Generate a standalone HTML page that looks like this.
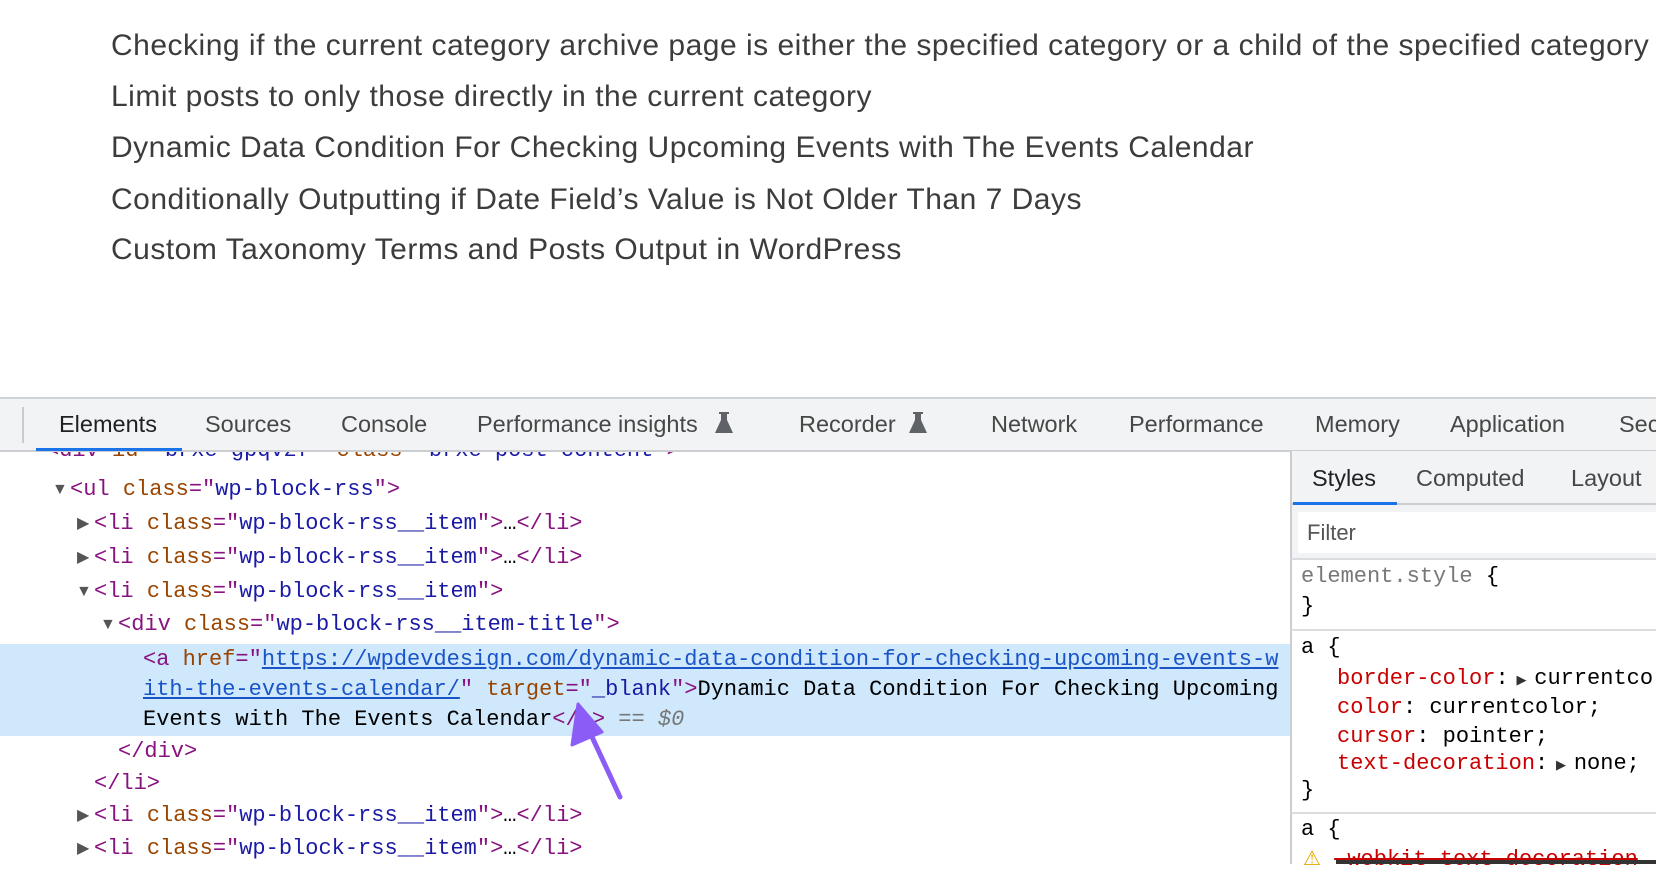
<!DOCTYPE html>
<html><head><meta charset="utf-8"><style>
*{margin:0;padding:0;box-sizing:border-box}
body{width:1656px;height:864px;overflow:hidden;background:#fff;position:relative;font-family:"Liberation Sans",Arial,sans-serif}
.t{position:absolute;left:111px;font-size:30px;letter-spacing:0.5px;color:#3c3c3c;white-space:nowrap;line-height:34px}
.tabs{position:absolute;left:0;top:397px;width:1656px;height:55px;background:#f1f3f4;border-top:2px solid #d0d3d6;border-bottom:2px solid #cbcdd1}
.tab{position:absolute;top:12px;font-size:23.5px;color:#474747;white-space:nowrap}
.m{position:absolute;font-family:"Liberation Mono",monospace;font-size:22px;white-space:nowrap;line-height:30px}
.tg{color:#881280}.an{color:#994500}.av{color:#1a1aa6}.lk{color:#1a55c8;text-decoration:underline}
.pr{color:#c80000}
.sep{position:absolute;left:1291px;width:365px;height:2px;background:#dadce0}
.ar{position:absolute;color:#555;font-size:16px;line-height:30px}
</style></head><body>
<div class="t" style="top:29px">Checking if the current category archive page is either the specified category or a child of the specified category</div>
<div class="t" style="top:80px">Limit posts to only those directly in the current category</div>
<div class="t" style="top:131px">Dynamic Data Condition For Checking Upcoming Events with The Events Calendar</div>
<div class="t" style="top:183px">Conditionally Outputting if Date Field’s Value is Not Older Than 7 Days</div>
<div class="t" style="top:233px">Custom Taxonomy Terms and Posts Output in WordPress</div>

<div class="tabs">
<div style="position:absolute;left:22px;top:8px;width:2px;height:36px;background:#c8cbcf"></div>
<div class="tab" style="left:59px;color:#202124">Elements</div>
<div style="position:absolute;left:36px;top:49px;width:146px;height:3px;background:#1a73e8"></div>
<div class="tab" style="left:205px">Sources</div>
<div class="tab" style="left:341px">Console</div>
<div class="tab" style="left:477px">Performance insights</div>
<svg style="position:absolute;left:714px;top:12px" width="20" height="24" viewBox="0 0 20 24"><path d="M5 1h10v2h-2v6l6 13H1l6-13V3H5z" fill="#5f6368"/></svg>
<div class="tab" style="left:799px">Recorder</div>
<svg style="position:absolute;left:908px;top:12px" width="20" height="24" viewBox="0 0 20 24"><path d="M5 1h10v2h-2v6l6 13H1l6-13V3H5z" fill="#5f6368"/></svg>
<div class="tab" style="left:991px">Network</div>
<div class="tab" style="left:1129px">Performance</div>
<div class="tab" style="left:1315px">Memory</div>
<div class="tab" style="left:1450px">Application</div>
<div class="tab" style="left:1619px">Sec</div>
</div>

<div style="position:absolute;left:0;top:644px;width:1290px;height:92px;background:#cfe8fc"></div>

<div class="m" style="left:46px;top:436px;clip-path:inset(16px 0 0 0)"><span class="tg">&lt;div </span><span class="an">id</span><span class="tg">="</span><span class="av">brxe-gpqvzf</span><span class="tg">" </span><span class="an">class</span><span class="tg">="</span><span class="av">brxe-post-content</span><span class="tg">"&gt;</span></div>
<div class="ar" style="left:52px;top:475px">▼</div>
<div class="m" style="left:70px;top:475px"><span class="tg">&lt;ul </span><span class="an">class</span><span class="tg">="</span><span class="av">wp-block-rss</span><span class="tg">"&gt;</span></div>
<div class="ar" style="left:77px;top:509px">▶</div>
<div class="m" style="left:94px;top:509px"><span class="tg">&lt;li </span><span class="an">class</span><span class="tg">="</span><span class="av">wp-block-rss__item</span><span class="tg">"&gt;</span>…<span class="tg">&lt;/li&gt;</span></div>
<div class="ar" style="left:77px;top:543px">▶</div>
<div class="m" style="left:94px;top:543px"><span class="tg">&lt;li </span><span class="an">class</span><span class="tg">="</span><span class="av">wp-block-rss__item</span><span class="tg">"&gt;</span>…<span class="tg">&lt;/li&gt;</span></div>
<div class="ar" style="left:76px;top:577px">▼</div>
<div class="m" style="left:94px;top:577px"><span class="tg">&lt;li </span><span class="an">class</span><span class="tg">="</span><span class="av">wp-block-rss__item</span><span class="tg">"&gt;</span></div>
<div class="ar" style="left:100px;top:610px">▼</div>
<div class="m" style="left:118px;top:610px"><span class="tg">&lt;div </span><span class="an">class</span><span class="tg">="</span><span class="av">wp-block-rss__item-title</span><span class="tg">"&gt;</span></div>
<div class="m" style="left:143px;top:645px"><span class="tg">&lt;a </span><span class="an">href</span><span class="tg">="</span><span class="lk">https://wpdevdesign.com/dynamic-data-condition-for-checking-upcoming-events-w</span></div>
<div class="m" style="left:143px;top:675px"><span class="lk">ith-the-events-calendar/</span><span class="tg">" </span><span class="an">target</span><span class="tg">="</span><span class="av">_blank</span><span class="tg">"&gt;</span>Dynamic Data Condition For Checking Upcoming</div>
<div class="m" style="left:143px;top:705px">Events with The Events Calendar<span class="tg">&lt;/a&gt;</span> <span style="color:#777">==</span> <i style="color:#777">$0</i></div>
<div class="m" style="left:118px;top:737px"><span class="tg">&lt;/div&gt;</span></div>
<div class="m" style="left:94px;top:769px"><span class="tg">&lt;/li&gt;</span></div>
<div class="ar" style="left:77px;top:801px">▶</div>
<div class="m" style="left:94px;top:801px"><span class="tg">&lt;li </span><span class="an">class</span><span class="tg">="</span><span class="av">wp-block-rss__item</span><span class="tg">"&gt;</span>…<span class="tg">&lt;/li&gt;</span></div>
<div class="ar" style="left:77px;top:834px">▶</div>
<div class="m" style="left:94px;top:834px"><span class="tg">&lt;li </span><span class="an">class</span><span class="tg">="</span><span class="av">wp-block-rss__item</span><span class="tg">"&gt;</span>…<span class="tg">&lt;/li&gt;</span></div>

<svg style="position:absolute;left:0;top:0" width="1656" height="864"><path d="M620 797 L586 724" stroke="#8b5cf6" stroke-width="5" stroke-linecap="round"/><path d="M578 704 L572 745 L602 732 Z" fill="#8b5cf6" stroke="#8b5cf6" stroke-width="3" stroke-linejoin="round"/></svg>

<div style="position:absolute;left:1290px;top:451px;width:2px;height:413px;background:#cbcdd1"></div>
<div style="position:absolute;left:1292px;top:451px;width:364px;height:54px;background:#f1f3f4;border-bottom:2px solid #cbcdd1"></div>
<div class="tab" style="left:1312px;top:465px;color:#202124">Styles</div>
<div class="tab" style="left:1416px;top:465px">Computed</div>
<div class="tab" style="left:1571px;top:465px">Layout</div>
<div style="position:absolute;left:1293px;top:502px;width:104px;height:3px;background:#1a73e8"></div>
<div style="position:absolute;left:1292px;top:505px;width:364px;height:54px;background:#f1f3f4"></div>
<div style="position:absolute;left:1298px;top:512px;width:358px;height:41px;background:#fff"></div>
<div class="tab" style="left:1307px;top:520px;font-size:22px;color:#555">Filter</div>
<div class="sep" style="top:558px"></div>
<div class="m" style="left:1301px;top:562px"><span style="color:#777">element.style</span> {</div>
<div class="m" style="left:1301px;top:592px">}</div>
<div class="sep" style="top:629px"></div>
<div class="m" style="left:1301px;top:633px">a {</div>
<div class="m" style="left:1337px;top:664px"><span class="pr">border-color</span>:<span style="font-size:13px;color:#333"> ▶ </span>currentcolor;</div>
<div class="m" style="left:1337px;top:693px"><span class="pr">color</span>: currentcolor;</div>
<div class="m" style="left:1337px;top:722px"><span class="pr">cursor</span>: pointer;</div>
<div class="m" style="left:1337px;top:749px"><span class="pr">text-decoration</span>:<span style="font-size:13px;color:#333"> ▶ </span>none;</div>
<div class="m" style="left:1301px;top:776px">}</div>
<div class="sep" style="top:812px"></div>
<div class="m" style="left:1301px;top:815px">a {</div>
<div class="m" style="left:1303px;top:845px"><span style="color:#e8a800;font-size:20px">⚠</span> <span class="pr" style="text-decoration:line-through">-webkit-text-decoration</span></div>
<div style="position:absolute;left:1336px;top:860px;width:320px;height:4px;background:#333"></div>
</body></html>
